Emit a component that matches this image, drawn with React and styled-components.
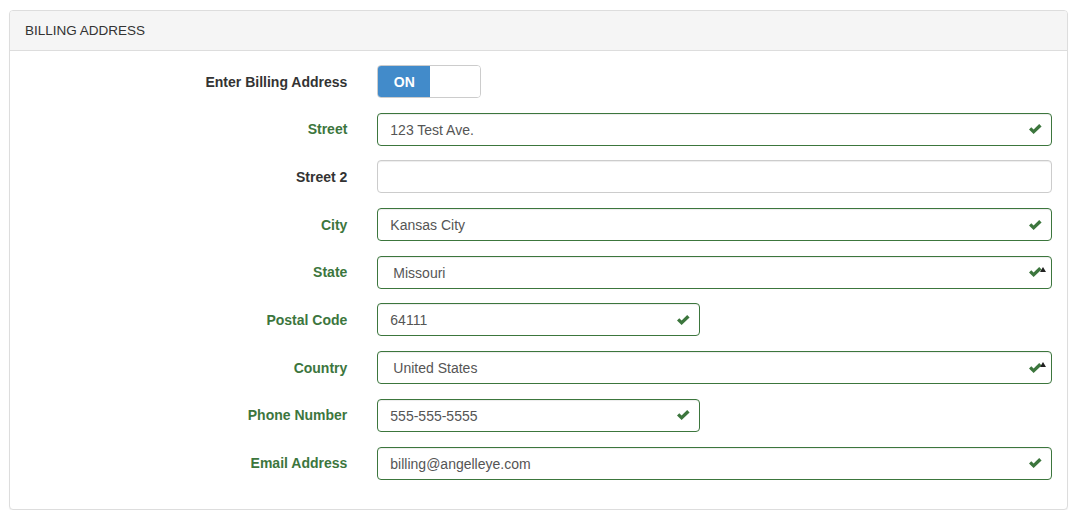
import React from "react";
import styled, { createGlobalStyle } from "styled-components";

const GlobalStyle = createGlobalStyle`
  html, body { margin: 0; padding: 0; background: #fff; }
  body { font-family: "Liberation Sans", Arial, sans-serif; color: #333; }
  * { box-sizing: border-box; }
`;

const Page = styled.div`
  padding: 10px 12px 0 9px;
`;

const Panel = styled.section`
  border: 1px solid #ddd;
  border-radius: 4px;
  box-shadow: 0 1px 1px rgba(0, 0, 0, 0.05);
  background: #fff;
`;

const Heading = styled.header`
  background: #f5f5f5;
  border-bottom: 1px solid #ddd;
  border-radius: 3px 3px 0 0;
  padding: 10px 15px;
  font-size: 13.5px;
  line-height: 19px;
  color: #333;
  text-transform: uppercase;
`;

const Body = styled.div`
  padding: 14px 0 29px;
  display: flex;
  flex-direction: column;
  gap: 14.7px;
`;

const Row = styled.div`
  display: grid;
  grid-template-columns: 1fr 2fr;
  align-items: center;
`;

const Label = styled.label`
  padding: 0 15px;
  text-align: right;
  font-size: 14px;
  font-weight: bold;
  color: ${(p) => (p.$success ? "#3c763d" : "#333")};
`;

const Control = styled.div`
  padding: 0 15px;
`;

const FieldWrap = styled.div`
  position: relative;
  width: ${(p) => (p.$short ? "calc(50% - 15px)" : "100%")};
`;

const TextInput = styled.input`
  display: block;
  width: 100%;
  height: 33px;
  padding: 1px 12px 0;
  font-family: "Liberation Sans", Arial, sans-serif;
  font-size: 14px;
  color: #555;
  background: #fff;
  border: 1px solid ${(p) => (p.$success ? "#3c763d" : "#ccc")};
  border-radius: 4px;
  box-shadow: inset 0 1px 1px rgba(0, 0, 0, 0.075);
  outline: none;
`;

const SelectBox = styled.select`
  display: block;
  width: 100%;
  height: 33px;
  padding: 1px 12px 0 15px;
  font-family: "Liberation Sans", Arial, sans-serif;
  font-size: 14px;
  color: #555;
  background: #fff;
  border: 1px solid #3c763d;
  border-radius: 4px;
  box-shadow: inset 0 1px 1px rgba(0, 0, 0, 0.075);
  appearance: none;
  -webkit-appearance: none;
  outline: none;
`;

const Feedback = styled.span`
  position: absolute;
  right: 10px;
  top: 50%;
  transform: translateY(-50%);
  display: flex;
  align-items: center;
  pointer-events: none;
`;

const Arrow = styled.span`
  position: absolute;
  right: 6px;
  top: 11px;
  width: 0;
  height: 0;
  border-left: 3px solid transparent;
  border-right: 3px solid transparent;
  border-bottom: 5px solid #222;
  pointer-events: none;
`;

const Switch = styled.div`
  display: flex;
  width: 104px;
  height: 33px;
  border: 1px solid #ccc;
  border-radius: 4px;
  overflow: hidden;
  background: #fff;
`;

const SwitchOn = styled.span`
  width: 52px;
  display: flex;
  align-items: center;
  justify-content: center;
  background: #428bca;
  color: #fff;
  font-size: 14px;
  font-weight: bold;
`;

const SwitchOff = styled.span`
  flex: 1;
  background: #fff;
`;

const Check = () => (
  <svg width="13" height="10" viewBox="0 0 13 10">
    <polygon points="0,5.6 2.3,3.3 4.6,5.6 10.2,0 12.6,2.4 4.6,10" fill="#3c763d" />
  </svg>
);

const fields = [
  { label: "Street", value: "123 Test Ave.", success: true },
  { label: "Street 2", value: "", success: false },
  { label: "City", value: "Kansas City", success: true },
  { label: "State", value: "Missouri", success: true, select: true },
  { label: "Postal Code", value: "64111", success: true, short: true },
  { label: "Country", value: "United States", success: true, select: true },
  { label: "Phone Number", value: "555-555-5555", success: true, short: true },
  { label: "Email Address", value: "billing@angelleye.com", success: true },
];

export default function App() {
  return (
    <>
      <GlobalStyle />
      <Page>
        <Panel>
          <Heading>Billing Address</Heading>
          <Body>
            <Row>
              <Label>Enter Billing Address</Label>
              <Control>
                <Switch>
                  <SwitchOn>ON</SwitchOn>
                  <SwitchOff />
                </Switch>
              </Control>
            </Row>
            {fields.map((f) => (
              <Row key={f.label}>
                <Label $success={f.success}>{f.label}</Label>
                <Control>
                  <FieldWrap $short={f.short}>
                    {f.select ? (
                      <SelectBox value={f.value} onChange={() => {}}>
                        <option value={f.value}>{f.value}</option>
                      </SelectBox>
                    ) : (
                      <TextInput
                        readOnly
                        value={f.value}
                        $success={f.success}
                      />
                    )}
                    {f.success && (
                      <Feedback>
                        <Check />
                      </Feedback>
                    )}
                    {f.select && <Arrow />}
                  </FieldWrap>
                </Control>
              </Row>
            ))}
          </Body>
        </Panel>
      </Page>
    </>
  );
}
